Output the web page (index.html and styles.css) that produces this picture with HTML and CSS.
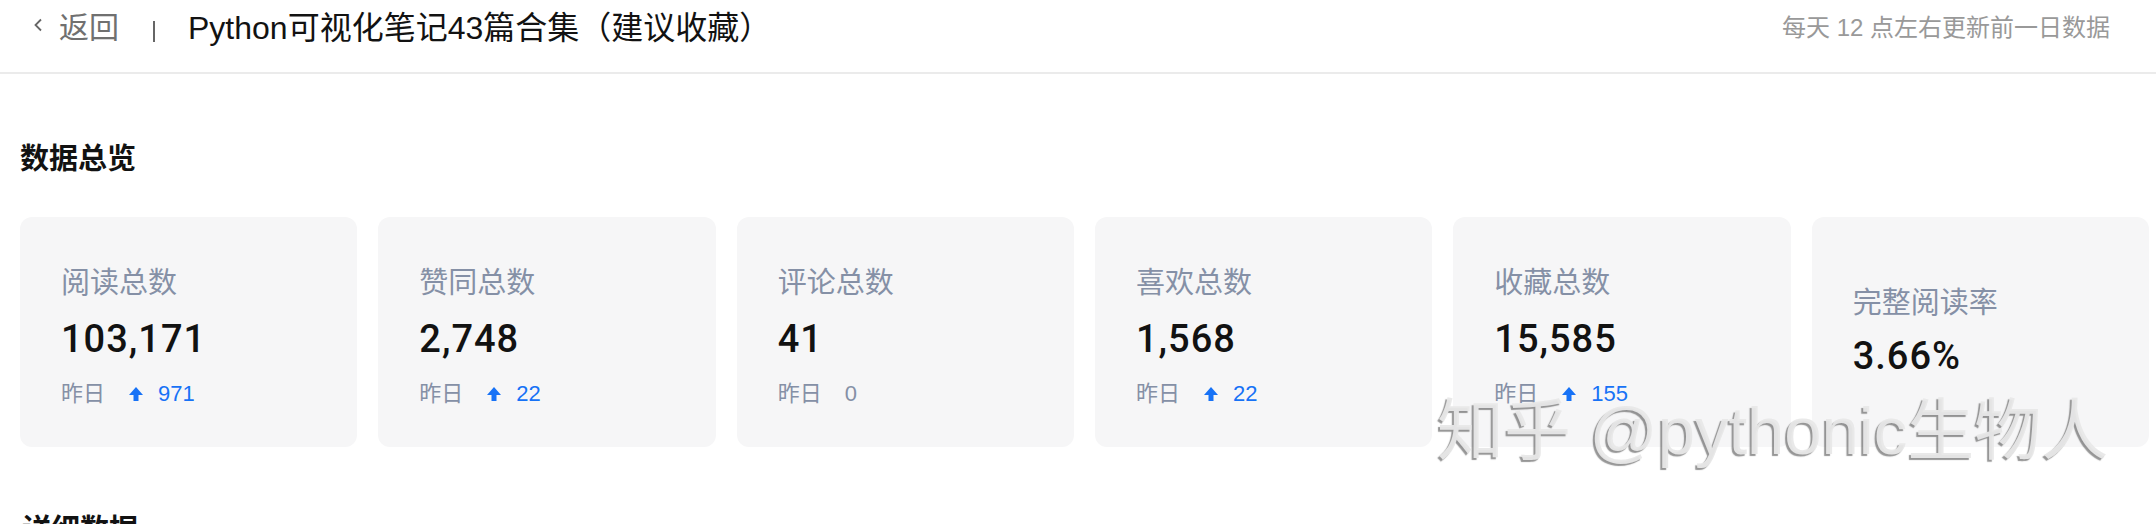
FILE: index.html
```html
<!DOCTYPE html>
<html lang="zh-CN">
<head>
    <meta charset="UTF-8">
    <title>数据总览</title>
    <link rel="stylesheet" href="styles.css">
</head>
<body>
<header class="topbar">
    <a class="back" href="#">
        <svg class="back-icon" width="10" height="14" viewBox="0 0 10 14">
            <polyline points="8,1.5 2.5,7 8,12.5" fill="none" stroke="#666" stroke-width="1.8"/>
        </svg>
        <span>返回</span>
    </a>
    <span class="divider"></span>
    <h1 class="title">Python可视化笔记43篇合集（建议收藏）</h1>
    <span class="note">每天 12 点左右更新前一日数据</span>
</header>

<main class="page">
    <h2 class="section-title">数据总览</h2>
    <div class="cards">
        <div class="card">
            <div class="card-label">阅读总数</div>
            <div class="card-num">103,171</div>
            <div class="card-diff">昨日
                <svg class="up" width="16" height="16" viewBox="0 0 16 16"><path d="M8 1 L15 9 H10.5 V15 H5.5 V9 H1 Z" fill="#1772f6"/></svg>
                <span class="diff-num">971</span>
            </div>
        </div>
        <div class="card">
            <div class="card-label">赞同总数</div>
            <div class="card-num">2,748</div>
            <div class="card-diff">昨日
                <svg class="up" width="16" height="16" viewBox="0 0 16 16"><path d="M8 1 L15 9 H10.5 V15 H5.5 V9 H1 Z" fill="#1772f6"/></svg>
                <span class="diff-num">22</span>
            </div>
        </div>
        <div class="card">
            <div class="card-label">评论总数</div>
            <div class="card-num">41</div>
            <div class="card-diff">昨日
                <span class="diff-zero">0</span>
            </div>
        </div>
        <div class="card">
            <div class="card-label">喜欢总数</div>
            <div class="card-num">1,568</div>
            <div class="card-diff">昨日
                <svg class="up" width="16" height="16" viewBox="0 0 16 16"><path d="M8 1 L15 9 H10.5 V15 H5.5 V9 H1 Z" fill="#1772f6"/></svg>
                <span class="diff-num">22</span>
            </div>
        </div>
        <div class="card">
            <div class="card-label">收藏总数</div>
            <div class="card-num">15,585</div>
            <div class="card-diff">昨日
                <svg class="up" width="16" height="16" viewBox="0 0 16 16"><path d="M8 1 L15 9 H10.5 V15 H5.5 V9 H1 Z" fill="#1772f6"/></svg>
                <span class="diff-num">155</span>
            </div>
        </div>
        <div class="card card-rate">
            <div class="card-label">完整阅读率</div>
            <div class="card-num">3.66%</div>
        </div>
    </div>
    <h2 class="section-title detail">详细数据</h2>
</main>

<!--水印-->
<div class="watermark">知乎 @pythonic生物人</div>
</body>
</html>
```

FILE: styles.css
```css
* {
    padding: 0;
    margin: 0;
    box-sizing: border-box;
}
body {
    position: relative;
    overflow: hidden;
    height: 524px;
    background: #fff;
    color: #121212;
    font-family: "Liberation Sans", "Noto Sans CJK SC", sans-serif;
}
.topbar {
    display: flex;
    align-items: center;
    height: 74px;
    padding: 0 46px 22px 33px;
    border-bottom: 2px solid #ebebeb;
}
.back {
    display: flex;
    align-items: center;
    color: #707070;
    font-size: 30px;
    text-decoration: none;
}
.back-icon {
    margin-right: 16px;
}
.divider {
    flex: none;
    width: 2px;
    height: 21px;
    margin: 12px 33px 0 34px;
    background: #666;
}
.title {
    font-size: 32px;
    font-weight: normal;
    color: #121212;
}
.note {
    margin-left: auto;
    font-size: 24px;
    color: #999;
}
.page {
    padding: 0 7px 0 20px;
}
.section-title {
    margin-top: 65px;
    font-size: 29px;
    line-height: 40px;
    font-weight: bold;
    color: #121212;
}
.section-title.detail {
    margin-top: 63px;
    margin-left: 2px;
}
.cards {
    display: flex;
    gap: 21px;
    margin-top: 38px;
}
.card {
    flex: 1;
    display: flex;
    flex-direction: column;
    justify-content: center;
    height: 230px;
    padding: 8px 0 0 41px;
    border-radius: 12px;
    background: #f6f6f7;
}
.card-rate {
    padding-top: 0;
}
.card-rate .card-num {
    margin-top: 8px;
}
.card-label {
    font-size: 29px;
    line-height: 40px;
    color: #8590a6;
}
.card-num {
    margin-top: 11px;
    font-family: Roboto, "Liberation Sans", sans-serif;
    font-size: 38px;
    font-weight: 500;
    line-height: 50px;
    letter-spacing: 1px;
    color: #121212;
}
.card-diff {
    display: flex;
    align-items: center;
    margin-top: 15px;
    font-size: 22px;
    line-height: 30px;
    color: #8590a6;
}
.up {
    margin: 0 14px 0 23px;
}
.diff-num {
    color: #1772f6;
}
.diff-zero {
    margin-left: 23px;
    color: #8590a6;
}
.watermark {
    position: absolute;
    left: 1437px;
    top: 397px;
    font-size: 67px;
    line-height: 67px;
    color: rgba(232, 232, 232, 0.95);
    text-shadow: -2px 2px 1px rgba(80, 80, 80, 0.6);
    white-space: nowrap;
}
```
